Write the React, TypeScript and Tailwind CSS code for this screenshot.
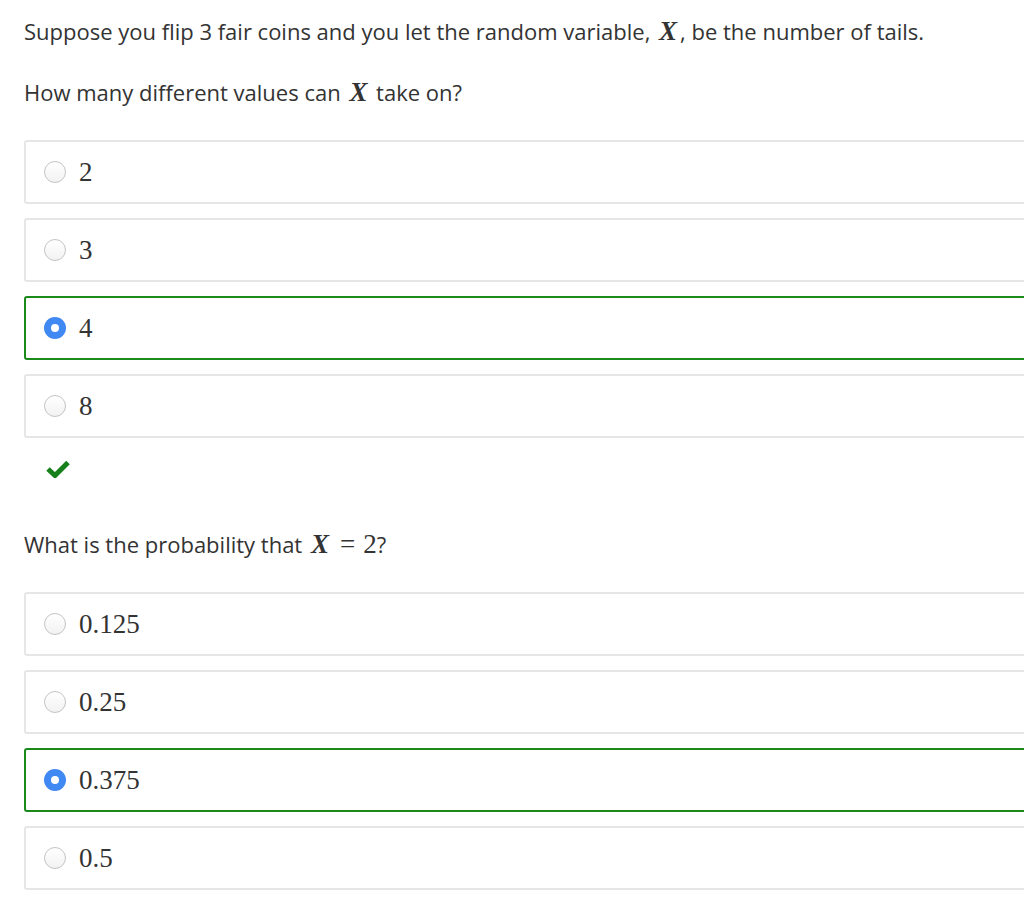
import React from "react";

type Option = { label: string; selected?: boolean };

const q1: Option[] = [{ label: "2" }, { label: "3" }, { label: "4", selected: true }, { label: "8" }];
const q2: Option[] = [
  { label: "0.125" },
  { label: "0.25" },
  { label: "0.375", selected: true },
  { label: "0.5" },
];

function MathX() {
  return (
    <span className="font-['Liberation_Serif',serif] italic font-semibold text-[27px] leading-[0] mx-[3px]">X</span>
  );
}

function Radio({ on }: { on?: boolean }) {
  if (on) {
    return (
      <span className="flex h-[22px] w-[22px] shrink-0 items-center justify-center rounded-full bg-[#4189f2]">
        <span className="h-[8px] w-[8px] rounded-full bg-white" />
      </span>
    );
  }
  return (
    <span className="h-[22px] w-[22px] shrink-0 rounded-full border border-[#c4c4c4] bg-gradient-to-b from-white to-[#f2f2f2]" />
  );
}

function Choices({ options }: { options: Option[] }) {
  return (
    <div className="flex flex-col gap-[14px]">
      {options.map((o) => (
        <div
          key={o.label}
          className={`flex h-[64px] w-[1100px] items-center gap-[13px] rounded-[3px] border-2 pl-[18px] ${
            o.selected ? "border-[#1b8a1b]" : "border-[#e6e6e6]"
          }`}
        >
          <Radio on={o.selected} />
          <span className="font-['Liberation_Serif',serif] text-[27px] leading-none text-[#333]">
            {o.label}
          </span>
        </div>
      ))}
    </div>
  );
}

export default function App() {
  return (
    <div className="min-h-screen overflow-hidden bg-white pl-6 font-['Open_Sans',sans-serif] text-[22px] leading-[28px] text-[#333]">
      <p className="pt-[17px]">
        Suppose you flip 3 fair coins and you let the random variable, <MathX />, be the number of tails.
      </p>
      <p className="mt-[33px]">
        How many different values can <MathX /> take on?
      </p>
      <div className="mt-[34px]">
        <Choices options={q1} />
      </div>
      <div className="mt-[22px] pl-[22px]">
        <svg width="24" height="18" viewBox="0 0 24 18" aria-hidden className="block">
          <path d="M2 9 L9 15.5 L22 2.5" fill="none" stroke="#16801a" strokeWidth="5" strokeLinecap="butt" strokeLinejoin="miter" />
        </svg>
      </div>
      <p className="mt-[52px]">
        What is the probability that <MathX />
        <span className="font-['Liberation_Serif',serif] text-[27px] leading-[0]">
          <span className="mx-[8px]">=</span>2
        </span>
        ?
      </p>
      <div className="mt-[34px]">
        <Choices options={q2} />
      </div>
    </div>
  );
}
